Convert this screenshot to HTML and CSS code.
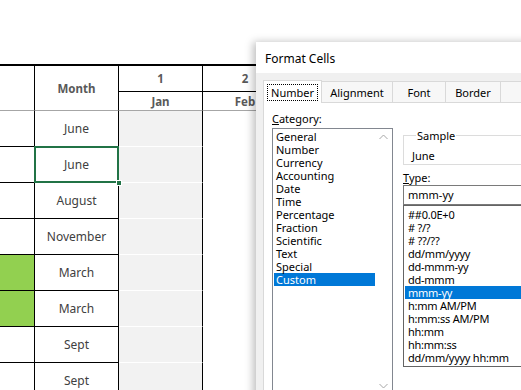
FILE: index.html
```html
<!DOCTYPE html>
<html>
<head>
<meta charset="utf-8">
<link rel="stylesheet" href="styles.css">
</head>
<body>
<div class="screen">
  <div class="sheet">
    <div class="c a hdr"></div>
    <div class="c b hdr bold">Month</div>
    <div class="c cc n1 bold">1</div>
    <div class="c d n1 bold">2</div>
    <div class="c cc n2 bold">Jan</div>
    <div class="c d n2 bold">Feb</div>

    <div class="c a"></div><div class="c b">June</div><div class="c cc g"></div><div class="c d"></div>
    <div class="c a"></div><div class="c b sel">June<span class="handle"></span></div><div class="c cc g"></div><div class="c d"></div>
    <div class="c a"></div><div class="c b">August</div><div class="c cc g"></div><div class="c d"></div>
    <div class="c a"></div><div class="c b">November</div><div class="c cc g"></div><div class="c d"></div>
    <div class="c a green"></div><div class="c b">March</div><div class="c cc g"></div><div class="c d"></div>
    <div class="c a green"></div><div class="c b">March</div><div class="c cc g"></div><div class="c d"></div>
    <div class="c a"></div><div class="c b">Sept</div><div class="c cc g"></div><div class="c d"></div>
    <div class="c a"></div><div class="c b">Sept</div><div class="c cc g"></div><div class="c d"></div>
  </div>

  <div class="dialog">
    <div class="titlebar">Format Cells</div>
    <div class="tabs">
      <div class="tab active"><span class="focus">Number</span></div>
      <div class="tab t-align">Alignment</div>
      <div class="tab t-font">Font</div>
      <div class="tab t-border">Border</div>
      <div class="tab t-more"></div>
    </div>
    <div class="panel">
      <div class="leftcol">
        <div class="label"><u>C</u>ategory:</div>
        <div class="catlist">
          <div class="items">
            <div class="item">General</div>
            <div class="item">Number</div>
            <div class="item">Currency</div>
            <div class="item">Accounting</div>
            <div class="item">Date</div>
            <div class="item">Time</div>
            <div class="item">Percentage</div>
            <div class="item">Fraction</div>
            <div class="item">Scientific</div>
            <div class="item">Text</div>
            <div class="item">Special</div>
            <div class="item selitem">Custom</div>
          </div>
          <div class="scroll">
            <svg class="chev" width="9" height="6" viewBox="0 0 9 6"><path d="M0.5 5 L4.5 1 L8.5 5" fill="none" stroke="#a6a6a6" stroke-width="1"/></svg>
            <svg class="chev" width="9" height="6" viewBox="0 0 9 6"><path d="M0.5 1 L4.5 5 L8.5 1" fill="none" stroke="#a6a6a6" stroke-width="1"/></svg>
          </div>
        </div>
      </div>
      <div class="rightcol">
        <fieldset class="sample">
          <legend>Sample</legend>
          <div class="sampleval">June</div>
        </fieldset>
        <div class="label typelabel"><u>T</u>ype:</div>
        <div class="typeinput">mmm-yy</div>
        <div class="typelist">
          <div class="item2">##0.0E+0</div>
          <div class="item2"># ?/?</div>
          <div class="item2"># ??/??</div>
          <div class="item2">dd/mm/yyyy</div>
          <div class="item2">dd-mmm-yy</div>
          <div class="item2">dd-mmm</div>
          <div class="item2 selitem">mmm-yy</div>
          <div class="item2">h:mm AM/PM</div>
          <div class="item2">h:mm:ss AM/PM</div>
          <div class="item2">hh:mm</div>
          <div class="item2">hh:mm:ss</div>
          <div class="item2">dd/mm/yyyy hh:mm</div>
        </div>
      </div>
    </div>
  </div>
</div>
</body>
</html>
```

FILE: styles.css
```css
* { box-sizing: border-box; }
html, body { margin: 0; padding: 0; background: #fff; }
.screen {
  position: relative;
  width: 521px;
  height: 390px;
  overflow: hidden;
  font-family: "Noto Sans", "Open Sans", sans-serif;
}
.sheet {
  margin-top: 64px;
  border-top: 2px solid #000;
  display: grid;
  grid-template-columns: 35px 84px 84px 84px;
  grid-template-rows: 26px 19px repeat(8, 36px);
  font-size: 12px;
  color: #404040;
}
.c {
  display: flex;
  align-items: center;
  justify-content: center;
  border-bottom: 1px solid #000;
}
.a, .b, .cc { border-right: 1px solid #000; }
.hdr { grid-row: span 2; border-bottom: 1px solid #a6a6a6; }
.bold { font-weight: bold; color: #595959; font-size: 11.5px; }
.n1 { border-bottom: 1px solid #000; }
.n2 { border-bottom: 1px solid #a6a6a6; }
.d { border-bottom-color: #fff; }
.d.n1 { border-bottom-color: #000; }
.d.n2 { border-bottom-color: #a6a6a6; }
.g { background: #f2f2f2; border-bottom-color: #fff; }
.green { background: #92d050; }
.sel { position: relative; }
.sel::after {
  content: "";
  position: absolute;
  left: -1px; top: -1px; right: -1px; bottom: -1px;
  border: 2px solid #217346;
}
.handle {
  position: absolute;
  right: -4px;
  bottom: -4px;
  width: 6px;
  height: 6px;
  background: #217346;
  border: 1px solid #fff;
  z-index: 2;
}

.dialog {
  position: absolute;
  left: 256px;
  top: 42px;
  width: 300px;
  height: 360px;
  background: #f0f0f0;
  box-shadow: -3px 0 8px rgba(0,0,0,0.25);
  font-size: 11px;
  color: #000;
}
.titlebar {
  height: 31px;
  background: #fff;
  padding-left: 9px;
  padding-top: 2px;
  display: flex;
  align-items: center;
  font-size: 12px;
}
.tabs {
  display: flex;
  margin: 8px 0 0 7px;
  height: 21px;
  align-items: flex-end;
}
.tab {
  flex-shrink: 0;
  height: 21px;
  display: flex;
  align-items: center;
  justify-content: center;
  background: #f7f7f7;
  border: 1px solid #d9d9d9;
  border-left: none;
  border-bottom: none;
  line-height: 13px;
}
.tab.active {
  width: 59px;
  height: 23px;
  background: #fff;
  border-left: 1px solid #d9d9d9;
  margin-bottom: -1px;
  position: relative;
  z-index: 1;
}
.focus { border: 1px dotted #000; padding: 1px 3px; }
.t-align { width: 71px; }
.t-font { width: 53px; }
.t-border { width: 55px; }
.t-more { width: 40px; }
.panel {
  margin-left: 7px;
  height: 300px;
  background: #fff;
  border: 1px solid #d9d9d9;
  display: flex;
  padding: 9px 0 0 8px;
}
.label { line-height: 13px; height: 13px; }
.leftcol { width: 121px; flex-shrink: 0; }
.catlist {
  margin-top: 3px;
  height: 270px;
  border: 1px solid #828790;
  display: flex;
}
.items { width: 102px; padding: 1px 0 0 1px; }
.item { line-height: 13px; height: 13px; padding-left: 2px; }
.selitem { background: #0078d7; color: #fff; }
.scroll {
  flex: 1;
  display: flex;
  flex-direction: column;
  justify-content: space-between;
  align-items: center;
  padding: 5px 0 8px;
}
.rightcol { margin-left: 10px; width: 150px; flex-shrink: 0; padding-top: 17px; }
.sample {
  margin: 0;
  border: 1px solid #dcdcdc;
  padding: 7px 8px 2px;
  height: 36px;
}
.sample legend { padding: 0 1px; margin-left: 4px; line-height: 13px; }
.sampleval { line-height: 13px; }
.typelabel { margin-top: 6px; }
.typeinput {
  margin-top: 1px;
  height: 20px;
  border: 1px solid #7a7a7a;
  padding-left: 4px;
  line-height: 18px;
}
.typelist {
  border: 1px solid #646464;
  padding: 2px 0 2px 1px;
}
.item2 { line-height: 13px; height: 13px; padding-left: 3px; letter-spacing: -0.25px; }
```
